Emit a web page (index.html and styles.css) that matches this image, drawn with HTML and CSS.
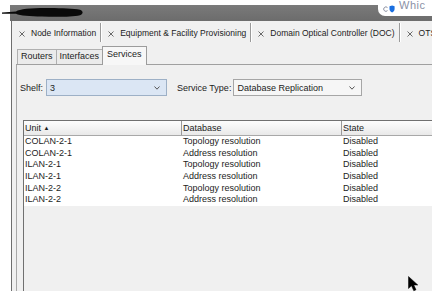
FILE: index.html
```html
<!DOCTYPE html>
<html>
<head>
<meta charset="utf-8">
<link rel="stylesheet" href="styles.css">
</head>
<body>
<div class="screen">
  <div class="window">
    <div class="titlebar"></div>
    <div class="main">
      <div class="tabbar">
        <div class="tab"><svg class="x" viewBox="0 0 8 8"><path d="M1.5 1.5L6.5 6.5M6.5 1.5L1.5 6.5"/></svg><span>Node Information</span></div>
        <div class="tab"><svg class="x" viewBox="0 0 8 8"><path d="M1.5 1.5L6.5 6.5M6.5 1.5L1.5 6.5"/></svg><span>Equipment &amp; Facility Provisioning</span></div>
        <div class="tab"><svg class="x" viewBox="0 0 8 8"><path d="M1.5 1.5L6.5 6.5M6.5 1.5L1.5 6.5"/></svg><span>Domain Optical Controller (DOC)</span></div>
        <div class="tab"><svg class="x" viewBox="0 0 8 8"><path d="M1.5 1.5L6.5 6.5M6.5 1.5L1.5 6.5"/></svg><span>OTS</span></div>
      </div>
      <div class="subtabs">
        <div class="subtab">Routers</div>
        <div class="subtab">Interfaces</div>
        <div class="subtab active">Services</div>
      </div>
      <div class="pane">
        <div class="filters">
          <span class="label">Shelf:</span>
          <div class="combo shelf"><span>3</span><svg class="chev" viewBox="0 0 6 4"><path d="M0.5 0.5L3 3.2L5.5 0.5"/></svg></div>
          <span class="label type-label">Service Type:</span>
          <div class="combo type"><span>Database Replication</span><svg class="chev" viewBox="0 0 6 4"><path d="M0.5 0.5L3 3.2L5.5 0.5"/></svg></div>
        </div>
        <div class="table">
          <div class="thead">
            <div class="th c1">Unit <span class="sort">▲</span></div>
            <div class="th c2">Database</div>
            <div class="th c3">State</div>
          </div>
          <div class="row"><div class="td c1">COLAN-2-1</div><div class="td c2">Topology resolution</div><div class="td c3">Disabled</div></div>
          <div class="row"><div class="td c1">COLAN-2-1</div><div class="td c2">Address resolution</div><div class="td c3">Disabled</div></div>
          <div class="row"><div class="td c1">ILAN-2-1</div><div class="td c2">Topology resolution</div><div class="td c3">Disabled</div></div>
          <div class="row"><div class="td c1">ILAN-2-1</div><div class="td c2">Address resolution</div><div class="td c3">Disabled</div></div>
          <div class="row"><div class="td c1">ILAN-2-2</div><div class="td c2">Topology resolution</div><div class="td c3">Disabled</div></div>
          <div class="row"><div class="td c1">ILAN-2-2</div><div class="td c2">Address resolution</div><div class="td c3">Disabled</div></div>
        </div>
      </div>
    </div>
  </div>
  <svg class="redact" viewBox="0 0 82 11"><path d="M0 5.6C5 5 10 4.8 14 4.4C18 1.8 30 0.8 48 1C60 1.1 72 1.4 78 2.8C81.5 4 81.5 7 78 8.2C70 10 55 10 40 9.6C28 9.4 18 8.8 14 6.8C10 6.6 5 6.6 0 6.8Z"/></svg>
  <div class="notice">
    <svg class="nicon" viewBox="0 0 12 8"><path class="c" d="M4.5 2.6A2.2 2.2 0 1 0 4.5 5.6"/><path class="shield" d="M6.5 1.2L9.2 0.6L11.6 1.2V4C11.6 5.8 10.2 7 9.1 7.5C8 7 6.5 5.8 6.5 4Z"/></svg>
    <span class="ntext">Whic</span>
  </div>
  <svg class="cursor" viewBox="0 0 12 16"><path d="M0.5 0.5V12.5L3.5 9.8L5.8 14.8L8 13.8L5.8 9H9.8Z"/></svg>
</div>
</body>
</html>
```

FILE: styles.css
```css
* { box-sizing: border-box; }

html, body {
  margin: 0;
  padding: 0;
  background: #ffffff;
}

body {
  font-family: "Liberation Sans", Arial, sans-serif;
  font-size: 9px;
  color: #1c1c1c;
}

.screen {
  position: relative;
  width: 446px;
  height: 305px;
  overflow: hidden;
  padding: 5px 14px 14px 10px;
}

.window {
  width: 422px;
  height: 286px;
  display: flex;
  flex-direction: column;
}

.titlebar {
  height: 16px;
  flex: none;
  background: linear-gradient(#7a7a7a, #6c6c6c);
}

.main {
  flex: 1;
  margin-left: 1px;
  border-left: 1px solid #6e6e6e;
  background: #f0f0f0;
  display: flex;
  flex-direction: column;
  overflow: hidden;
  min-height: 0;
}

.tabbar {
  height: 23px;
  flex: none;
  display: flex;
  align-items: center;
  white-space: nowrap;
  overflow: hidden;
  font-size: 8.5px;
}

.tab {
  display: flex;
  align-items: center;
  height: 19px;
  padding: 0 4px 0 6px;
  border-right: 1px solid #9a9a9a;
  box-shadow: 1px 0 0 #ffffff;
  flex: none;
}

.tab:last-child {
  border-right: none;
  box-shadow: none;
}

.x {
  width: 8px;
  height: 8px;
  margin-right: 5px;
  margin-top: 2px;
  fill: none;
  stroke: #6a6a6a;
  stroke-width: 1;
}

.subtabs {
  height: 21px;
  flex: none;
  margin-left: 4px;
  padding-left: 1px;
  display: flex;
  align-items: flex-end;
  border-bottom: 1px solid #a0a0a0;
}

.subtab {
  height: 15px;
  line-height: 13px;
  padding: 0 3px;
  border: 1px solid #b0b0b0;
  border-bottom: none;
  background: #ebebeb;
  margin-right: -1px;
  color: #1c1c1c;
}

.subtab.active {
  position: relative;
  height: 19px;
  line-height: 15px;
  margin-bottom: -1px;
  background: #f7f7f7;
  border-color: #9c9c9c;
  padding: 0 4px;
}

.pane {
  flex: 1;
  margin-left: 4px;
  border-left: 1px solid #a8a8a8;
  display: flex;
  flex-direction: column;
  min-height: 0;
}

.filters {
  display: flex;
  align-items: center;
  height: 17px;
  margin-top: 14px;
  padding-left: 3px;
  flex: none;
}

.label {
  margin-right: 3px;
}

.type-label {
  margin-left: 10px;
  margin-right: 2px;
}

.combo {
  height: 17px;
  border: 1px solid #a6a6a6;
  display: flex;
  align-items: center;
  justify-content: space-between;
  padding: 0 6px 0 3px;
}

.combo.shelf {
  width: 121px;
  background: #dbe6f4;
  border-color: #9db0c6;
}

.combo.type {
  width: 129px;
  background: #f6f6f6;
}

.chev {
  width: 6px;
  height: 4px;
  fill: none;
  stroke: #555555;
  stroke-width: 1;
}

.table {
  flex: 1;
  margin: 24px 0 0 6px;
  border-left: 1px solid #707070;
  border-top: 1px solid #707070;
  background: #f0f0f0;
  display: flex;
  flex-direction: column;
  min-height: 0;
}

.thead {
  display: flex;
  height: 15px;
  flex: none;
  background: linear-gradient(#fdfdfd, #e9e9e9);
  border-bottom: 1px solid #a8a8a8;
}

.th {
  line-height: 14px;
  padding-left: 1px;
  border-right: 1px solid #9a9a9a;
  white-space: nowrap;
}

.sort {
  font-size: 6px;
  vertical-align: 1px;
}

.c1 { width: 158px; flex: none; }
.c2 { width: 160px; flex: none; }
.c3 { flex: 1; }

.th.c3 { border-right: none; }

.row {
  display: flex;
  height: 11.67px;
  line-height: 11.67px;
  background: #ffffff;
  flex: none;
}

.td {
  padding-left: 1px;
  white-space: nowrap;
}

.row .c1 { width: 158px; }
.row .c2 { width: 160px; }

.redact {
  position: absolute;
  left: 2px;
  top: 7px;
  width: 82px;
  height: 11px;
  fill: #0a0a0a;
}

.notice {
  position: absolute;
  left: 378px;
  top: 0;
  width: 54px;
  height: 16px;
  background: #ffffff;
  border-bottom-left-radius: 7px;
  display: flex;
  align-items: center;
  padding-left: 5px;
  overflow: hidden;
}

.nicon {
  width: 12px;
  height: 8px;
  flex: none;
  margin-top: 1px;
}

.nicon .c {
  fill: none;
  stroke: #8a8fa0;
  stroke-width: 1;
}

.nicon .shield {
  fill: #1a6fe0;
}

.ntext {
  margin-left: 4px;
  font-family: "Liberation Sans", Arial, sans-serif;
  font-size: 11px;
  line-height: 11px;
  color: #8a91a6;
  letter-spacing: 0.5px;
  margin-top: -6px;
}

.cursor {
  position: absolute;
  left: 408px;
  top: 276px;
  width: 12px;
  height: 16px;
  fill: #000000;
  stroke: #000000;
  stroke-width: 0.5;
}
```
